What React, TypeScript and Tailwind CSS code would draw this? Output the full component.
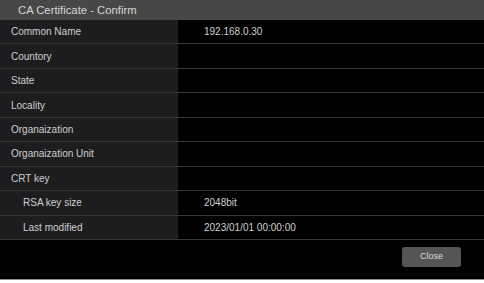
import React from "react";

const rows: { label: string; value: string; indent?: boolean }[] = [
  { label: "Common Name", value: "192.168.0.30" },
  { label: "Countory", value: "" },
  { label: "State", value: "" },
  { label: "Locality", value: "" },
  { label: "Organaization", value: "" },
  { label: "Organaization Unit", value: "" },
  { label: "CRT key", value: "" },
  { label: "RSA key size", value: "2048bit", indent: true },
  { label: "Last modified", value: "2023/01/01 00:00:00", indent: true },
];

export default function App() {
  return (
    <div
      className="w-[484px] h-[283px] bg-white overflow-hidden"
      style={{ fontFamily: '"Liberation Sans", Arial, sans-serif' }}
    >
      <div className="h-[280px] bg-black flex flex-col border-b border-[#8a8a8a]">
        <div className="h-[20px] bg-[#474747] flex items-center pl-[18px] text-[11.3px] text-[#d6d6d6]">
          CA Certificate - Confirm
        </div>
        <div className="flex flex-col">
          {rows.map((r) => (
            <div key={r.label} className="flex h-[24.44px] border-b border-[#363636]">
              <div
                className={`w-[178px] bg-[#1d1d1f] flex items-center text-[10px] text-[#cfcfcf] ${
                  r.indent ? "pl-[23px]" : "pl-[11px]"
                }`}
              >
                {r.label}
              </div>
              <div className="flex-1 flex items-center pl-[26px] text-[10px] text-[#cfcfcf]">
                {r.value}
              </div>
            </div>
          ))}
        </div>
        <div className="flex justify-end pr-[23px] pt-[7px]">
          <button className="w-[59px] h-[20px] rounded-[3px] bg-[#555555] text-[9px] text-[#d8d8d8]">
            Close
          </button>
        </div>
      </div>
    </div>
  );
}
